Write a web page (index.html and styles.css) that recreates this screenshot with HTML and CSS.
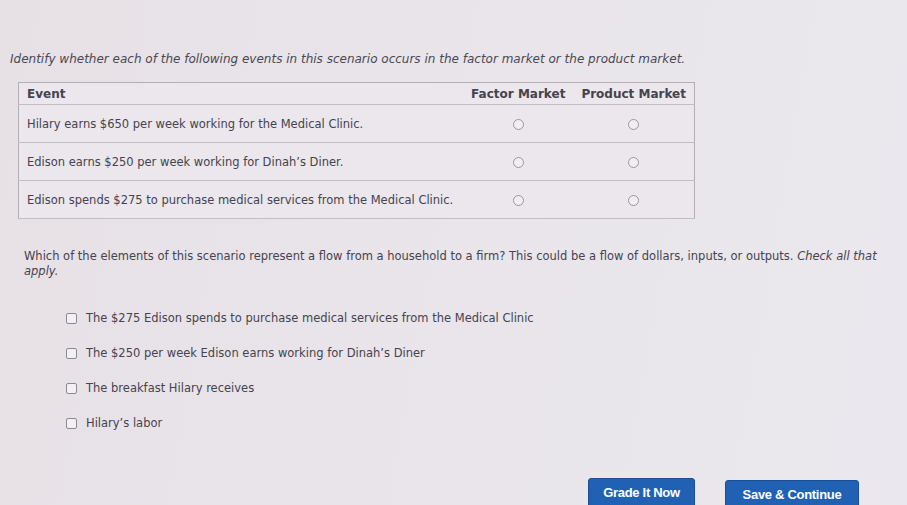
FILE: index.html
```html
<!DOCTYPE html>
<html lang="en">
<head>
<meta charset="utf-8">
<title>Factor and product markets</title>
<link rel="stylesheet" href="styles.css">
</head>
<body>
<main class="page">
  <p class="intro">Identify whether each of the following events in this scenario occurs in the factor market or the product market.</p>

  <table class="grid">
    <thead>
      <tr>
        <th class="col-event">Event</th>
        <th class="col-opt">Factor Market</th>
        <th class="col-opt">Product Market</th>
      </tr>
    </thead>
    <tbody>
      <tr>
        <td>Hilary earns $650 per week working for the Medical Clinic.</td>
        <td class="opt"><span class="radio"></span></td>
        <td class="opt"><span class="radio"></span></td>
      </tr>
      <tr>
        <td>Edison earns $250 per week working for Dinah’s Diner.</td>
        <td class="opt"><span class="radio"></span></td>
        <td class="opt"><span class="radio"></span></td>
      </tr>
      <tr>
        <td>Edison spends $275 to purchase medical services from the Medical Clinic.</td>
        <td class="opt"><span class="radio"></span></td>
        <td class="opt"><span class="radio"></span></td>
      </tr>
    </tbody>
  </table>

  <p class="question">Which of the elements of this scenario represent a flow from a household to a firm? This could be a flow of dollars, inputs, or outputs. <em>Check all that</em> <em>apply.</em></p>

  <ul class="choices">
    <li class="choice"><span class="box"></span>The $275 Edison spends to purchase medical services from the Medical Clinic</li>
    <li class="choice"><span class="box"></span>The $250 per week Edison earns working for Dinah’s Diner</li>
    <li class="choice"><span class="box"></span>The breakfast Hilary receives</li>
    <li class="choice"><span class="box"></span>Hilary’s labor</li>
  </ul>

  <div class="actions">
    <button class="btn btn-grade" type="button">Grade It Now</button>
    <button class="btn btn-save" type="button">Save &amp; Continue</button>
  </div>
</main>
</body>
</html>
```

FILE: styles.css
```css
html, body {
  margin: 0;
  height: 100%;
}

body {
  background: linear-gradient(100deg, #e7e1e6 0%, #e9e5ea 50%, #eae8ee 100%);
  color: #45434f;
  font-family: "DejaVu Sans", Verdana, sans-serif;
  font-size: 11.5px;
  overflow: hidden;
}

.page {
  padding: 52px 0 0 10px;
}

.intro {
  margin: 0;
  font-size: 12px;
  font-style: italic;
  line-height: 15px;
  color: #4a4854;
}

.grid {
  margin: 15px 0 0 8px;
  width: 677px;
  border-collapse: collapse;
  border: 1px solid #b3adb6;
  background: #ebe7ec;
}

.grid th {
  height: 21px;
  padding: 0 8px;
  font-size: 12px;
  font-weight: bold;
  color: #45434f;
  border-bottom: 1px solid #c2bdc4;
  vertical-align: middle;
  white-space: nowrap;
}

.grid .col-event {
  text-align: left;
  width: 430px;
}

.grid .col-opt {
  text-align: center;
}

.grid td {
  height: 37px;
  padding: 0 8px;
  border-bottom: 1px solid #c2bdc4;
  vertical-align: middle;
  white-space: nowrap;
}

.grid td.opt {
  text-align: center;
}

.radio {
  display: inline-block;
  width: 9px;
  height: 9px;
  border: 1px solid #9c97a0;
  border-radius: 50%;
  background: #f1eef2;
  vertical-align: middle;
}

.question {
  margin: 30px 0 0 14px;
  width: 866px;
  line-height: 15px;
}

.question em {
  font-style: italic;
}

.choices {
  list-style: none;
  margin: 32px 0 0 56px;
  padding: 0;
  display: flex;
  flex-direction: column;
  gap: 21px;
}

.choice {
  display: flex;
  align-items: center;
  gap: 9px;
  height: 14px;
}

.box {
  width: 9px;
  height: 9px;
  border: 1px solid #8d8892;
  border-radius: 2px;
  background: #f3f0f4;
  flex: none;
}

.actions {
  display: flex;
  align-items: flex-start;
  gap: 30px;
  margin: 48px 0 0 578px;
}

.btn {
  height: 30px;
  padding: 0 12px 2px;
  border: 1px solid #1a4f95;
  border-radius: 3px;
  background: #2161b4;
  color: #ffffff;
  font-family: "Liberation Sans", Arial, sans-serif;
  font-weight: bold;
  font-size: 13px;
  letter-spacing: -0.3px;
}

.btn-grade {
  width: 107px;
}

.btn-save {
  width: 134px;
  margin-top: 2px;
}
```
